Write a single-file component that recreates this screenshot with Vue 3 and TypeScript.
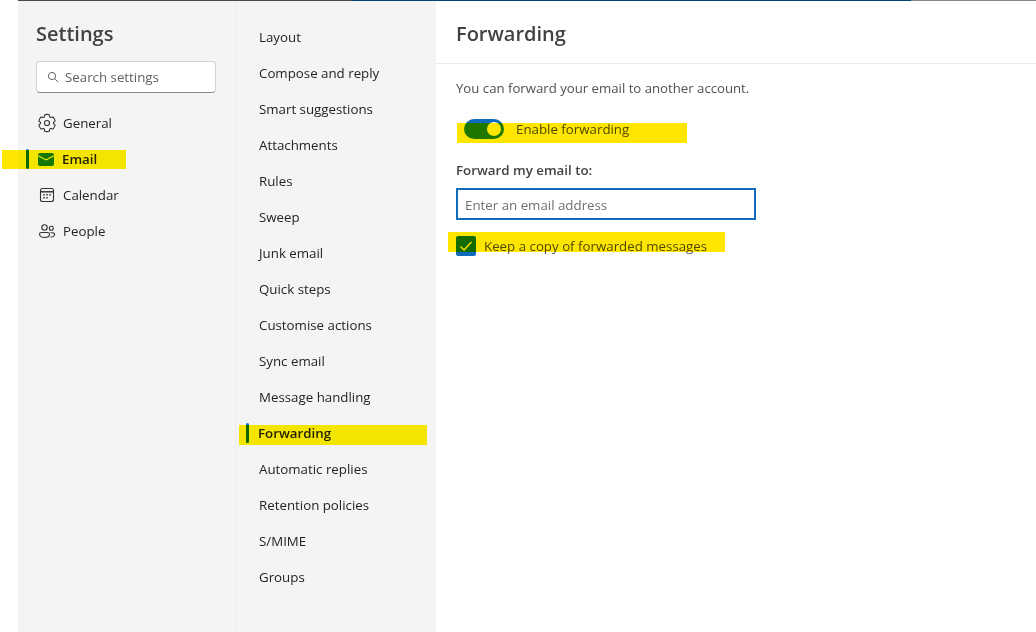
<template>
  <div class="page">
    <div class="top-line"></div>
    <div class="shell">
      <aside class="side">
        <h1>Settings</h1>
        <div class="search">
          <svg width="12" height="12" viewBox="0 0 12 12" fill="none" stroke="#616161" stroke-width="1">
            <circle cx="5" cy="5" r="3.6" />
            <path d="M7.7 7.7 11 11" />
          </svg>
          <span>Search settings</span>
        </div>
        <nav class="side-nav">
          <div v-for="item in sideItems" :key="item.name" class="side-row" :class="{ active: item.name === 'Email' }">
            <i v-if="item.name === 'Email'" class="bar"></i>
            <svg width="20" height="20" viewBox="0 0 20 20" class="side-icon" fill="none" stroke="#333" stroke-width="1.1">
              <template v-if="item.name === 'General'">
                <g transform="translate(10 10) scale(1.1) translate(-10 -9.8)" stroke-width="1">
                  <path d="M8 2.300c1.300-.4 2.700-.4 4 0l.5 1.900c.1.400.6.700 1 .6l1.900-.5c.9 1 1.600 2.200 2 3.500L16 9.200c-.3.300-.3.900 0 1.200l1.400 1.400c-.4 1.300-1.100 2.500-2 3.500l-1.900-.5c-.4-.1-.9.200-1 .6l-.5 1.900c-1.300.4-2.700.4-4 0l-.5-1.900c-.1-.4-.6-.7-1-.6l-1.900.5c-.9-1-1.600-2.200-2-3.500L4 10.400c.3-.3.300-.9 0-1.200L2.600 7.800c.4-1.300 1.100-2.500 2-3.500l1.900.5c.4.1.9-.2 1-.6z" stroke-linejoin="round" />
                  <circle cx="10" cy="9.800" r="2.300" />
                </g>
              </template>
              <template v-else-if="item.name === 'Email'">
                <rect x="1" y="4" width="16" height="13" rx="2" fill="#1480c0" stroke="none" />
                <path d="M1.200 6.800 9 11l7.800-4.200" stroke="#fff" stroke-width="1.100" />
              </template>
              <template v-else-if="item.name === 'Calendar'">
                <rect x="3.500" y="3.500" width="13" height="13" rx="2" />
                <path d="M3.500 6.800h13" stroke-width="1.500" />
                <path d="M6.300 9.800h1.500M9.300 9.800h1.500M12.300 9.800h1.500M6.300 12.800h1.500M9.300 12.800h1.500" stroke-width="1.500" />
              </template>
              <template v-else>
                <circle cx="7.500" cy="6.500" r="2.700" />
                <circle cx="14.300" cy="7.300" r="2" />
                <path d="M2.500 13.200c0-1 .8-1.700 1.700-1.700h6.600c.9 0 1.700.7 1.700 1.700 0 2-2 3.300-5 3.300s-5-1.300-5-3.300z" />
                <path d="M13.500 16c2.500.2 4-1 4-2.700 0-.9-.7-1.600-1.600-1.600H13.500" />
              </template>
            </svg>
            <span>{{ item.name }}</span>
            <i v-if="item.name === 'Email'" class="marker marker-email"></i>
          </div>
        </nav>
      </aside>

      <nav class="sub">
        <div v-for="item in subItems" :key="item" class="sub-row" :class="{ active: item === 'Forwarding' }">
          <i v-if="item === 'Forwarding'" class="bar"></i>
          <span>{{ item }}</span>
          <i v-if="item === 'Forwarding'" class="marker marker-forward"></i>
        </div>
      </nav>

      <main class="content">
        <header class="content-head">Forwarding</header>
        <div class="content-body">
          <p class="intro">You can forward your email to another account.</p>
          <div class="toggle-row">
            <span class="toggle"><span class="thumb"></span></span>
            <span>Enable forwarding</span>
            <i class="marker marker-toggle"></i>
          </div>
          <label class="field-label">Forward my email to:</label>
          <div class="field">Enter an email address</div>
          <div class="check-row">
            <span class="check">
              <svg width="14" height="14" viewBox="0 0 14 14" fill="none" stroke="#fff" stroke-width="1.300">
                <path d="M1.500 7.500 5 11 12.500 3" />
              </svg>
            </span>
            <span>Keep a copy of forwarded messages</span>
            <i class="marker marker-check"></i>
          </div>
        </div>
      </main>
    </div>
  </div>
</template>

<script setup lang="ts">
const sideItems = [
  { name: "General" },
  { name: "Email" },
  { name: "Calendar" },
  { name: "People" },
];

const subItems: string[] = [
  "Layout",
  "Compose and reply",
  "Smart suggestions",
  "Attachments",
  "Rules",
  "Sweep",
  "Junk email",
  "Quick steps",
  "Customise actions",
  "Sync email",
  "Message handling",
  "Forwarding",
  "Automatic replies",
  "Retention policies",
  "S/MIME",
  "Groups",
];
</script>

<style>
html,
body {
  margin: 0;
  background: #fff;
  overflow: hidden;
}
</style>

<style scoped>
.page {
  position: relative;
  width: 1036px;
  height: 632px;
  overflow: hidden;
  background: #fff;
  color: #242424;
  font-family: "Open Sans", "Noto Sans", sans-serif;
  font-size: 13.3px;
}

.top-line {
  height: 1px;
  margin-left: 18px;
  background: linear-gradient(
    to right,
    #4a4a4a 0 334px,
    #004578 334px 893px,
    #8a8a8a 893px
  );
}

.shell {
  display: flex;
  height: 631px;
  padding-left: 18px;
}

.side {
  width: 218px;
  flex: none;
  background: #f4f4f4;
  padding: 0 18px;
  box-sizing: border-box;
  border-right: 1px solid #eeeeee;
}

h1 {
  margin: 18px 0 0;
  font-size: 20px;
  line-height: 30px;
  font-weight: 600;
  color: #424242;
}

.search {
  display: flex;
  align-items: center;
  gap: 6px;
  width: 180px;
  height: 32px;
  margin-top: 12px;
  padding-left: 10px;
  box-sizing: border-box;
  background: #fff;
  border: 1px solid #d1d1d1;
  border-bottom-color: #8a8a8a;
  border-radius: 4px;
  color: #616161;
}

.side-nav {
  margin-top: 12px;
}

.side-row {
  position: relative;
  display: flex;
  align-items: center;
  gap: 6px;
  height: 36px;
}

.side-row.active {
  font-weight: 600;
  gap: 5px;
}

.side-icon {
  flex: none;
  margin-left: 1px;
}

.sub {
  width: 200px;
  flex: none;
  background: #f4f4f4;
  padding-top: 18px;
  box-sizing: border-box;
}

.sub-row {
  position: relative;
  display: flex;
  align-items: center;
  height: 36px;
  padding-left: 23px;
}

.sub-row.active {
  font-weight: 600;
  padding-left: 22px;
}

.bar {
  position: absolute;
  top: 8px;
  width: 3px;
  height: 20px;
  border-radius: 2px;
  background: #0f6cbd;
}

.side-row .bar {
  left: -10px;
}

.sub-row .bar {
  left: 10px;
}

.marker {
  position: absolute;
  height: 20px;
  background: #ffe600;
  mix-blend-mode: multiply;
}

.marker-email {
  left: -34px;
  top: 9px;
  width: 124px;
  height: 19px;
  background: linear-gradient(to right, #ffe600 0 16px, #fff000 16px);
}

.marker-forward {
  left: 3px;
  top: 10px;
  width: 188px;
  background: #fff000;
}

.marker-toggle {
  left: 1px;
  top: 4px;
  width: 230px;
}

.marker-check {
  left: -8px;
  top: -4px;
  width: 277px;
}

.content {
  flex: 1;
  min-width: 0;
}

.content-head {
  height: 63px;
  padding: 18px 20px 0;
  box-sizing: border-box;
  border-bottom: 1px solid #ededed;
  font-size: 20px;
  line-height: 30px;
  font-weight: 600;
  color: #424242;
}

.content-body {
  padding: 0 20px;
}

.intro {
  margin: 14px 0 0;
  font-size: 13.2px;
  line-height: 20px;
  color: #505050;
}

.toggle-row {
  position: relative;
  display: flex;
  align-items: center;
  gap: 12px;
  margin-top: 21px;
  height: 20px;
  padding-left: 8px;
  color: #505050;
}

.toggle {
  position: relative;
  width: 40px;
  height: 20px;
  border-radius: 10px;
  background: linear-gradient(to bottom, #0f6cbd 0 4px, #2084c0 4px);
}

.thumb {
  position: absolute;
  right: 3px;
  top: 3px;
  width: 14px;
  height: 14px;
  border-radius: 50%;
  background: #fff;
}

.field-label {
  display: block;
  margin-top: 21px;
  line-height: 20px;
  font-weight: 600;
  color: #424242;
}

.field {
  display: flex;
  align-items: center;
  width: 300px;
  height: 32px;
  margin-top: 8px;
  padding: 2px 0 0 7px;
  box-sizing: border-box;
  border: 2px solid #0f6cbd;
  color: #707070;
}

.check-row {
  position: relative;
  display: flex;
  align-items: center;
  gap: 8px;
  margin-top: 16px;
  height: 20px;
  color: #505050;
}

.check {
  display: flex;
  align-items: center;
  justify-content: center;
  width: 20px;
  height: 20px;
  border-radius: 2px;
  background: linear-gradient(to bottom, #1478c0 0 16px, #0f6cbd 16px);
}
</style>
